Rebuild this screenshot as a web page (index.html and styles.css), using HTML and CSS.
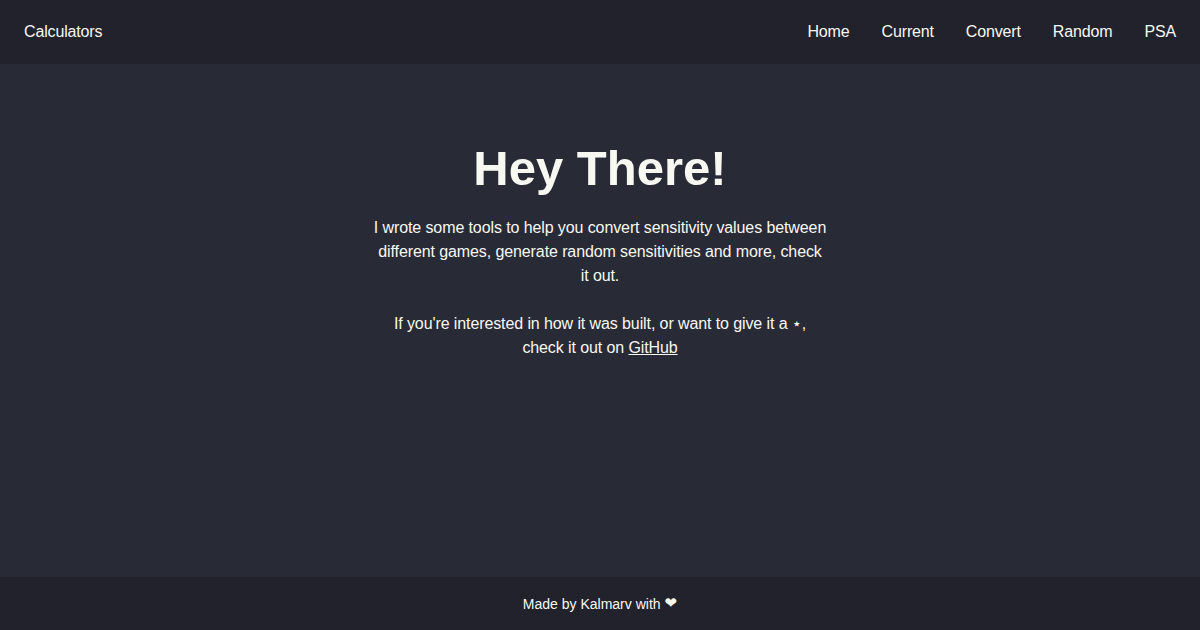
FILE: index.html
```html
<!DOCTYPE html>
<html lang="en">
<head>
    <meta charset="UTF-8">
    <meta name="viewport" content="width=device-width, initial-scale=1.0">
    <title>Calculators</title>
    <link rel="stylesheet" href="styles.css">
</head>
<body>
    <header class="navbar">
        <a class="brand" href="#">Calculators</a>
        <nav class="nav-links">
            <a href="#">Home</a>
            <a href="#">Current</a>
            <a href="#">Convert</a>
            <a href="#">Random</a>
            <a href="#">PSA</a>
        </nav>
    </header>

    <main class="hero">
        <h1>Hey There!</h1>
        <p>I wrote some tools to help you convert sensitivity values between different games, generate random sensitivities and more, check it out.</p>
        <p>If you're interested in how it was built, or want to give it a <span class="star">⋆</span>, check it out on <a href="#">GitHub</a></p>
    </main>

    <footer class="footer">
        Made by Kalmarv with <span class="heart">❤</span>
    </footer>
</body>
</html>
```

FILE: styles.css
```css
:root {
    --bg-color: #282a36;
    --bar-color: #21222c;
    --text-color: #f8f8f2;
}

html, body {
    height: 100%;
}

body {
    margin: 0;
    display: flex;
    flex-direction: column;
    background: var(--bg-color);
    color: var(--text-color);
    font-family: 'Liberation Sans', Arial, sans-serif;
    font-size: 16px;
}

a {
    color: var(--text-color);
    text-decoration: none;
}

.navbar {
    height: 64px;
    flex-shrink: 0;
    display: flex;
    align-items: center;
    justify-content: space-between;
    padding: 0 24px;
    background: var(--bar-color);
}

.nav-links {
    display: flex;
    gap: 32px;
    letter-spacing: -0.15px;
}

.brand {
    letter-spacing: -0.15px;
}

.hero {
    flex: 1;
    display: flex;
    flex-direction: column;
    align-items: center;
    padding-top: 76px;
    text-align: center;
}

.hero h1 {
    margin: 0 0 20px;
    font-size: 49px;
    line-height: 56px;
    font-weight: bold;
}

.hero p {
    max-width: 454px;
    margin: 0 0 24px;
    line-height: 24px;
    letter-spacing: -0.1px;
}

.hero p a {
    text-decoration: underline;
}

.star {
    font-family: 'DejaVu Sans', sans-serif;
    font-size: 16px;
    line-height: 1;
}

.footer {
    height: 53px;
    flex-shrink: 0;
    display: flex;
    align-items: center;
    justify-content: center;
    gap: 4px;
    background: var(--bar-color);
    font-size: 14px;
}

.heart {
    font-family: 'DejaVu Sans', sans-serif;
    font-size: 15px;
    line-height: 1;
}
```
